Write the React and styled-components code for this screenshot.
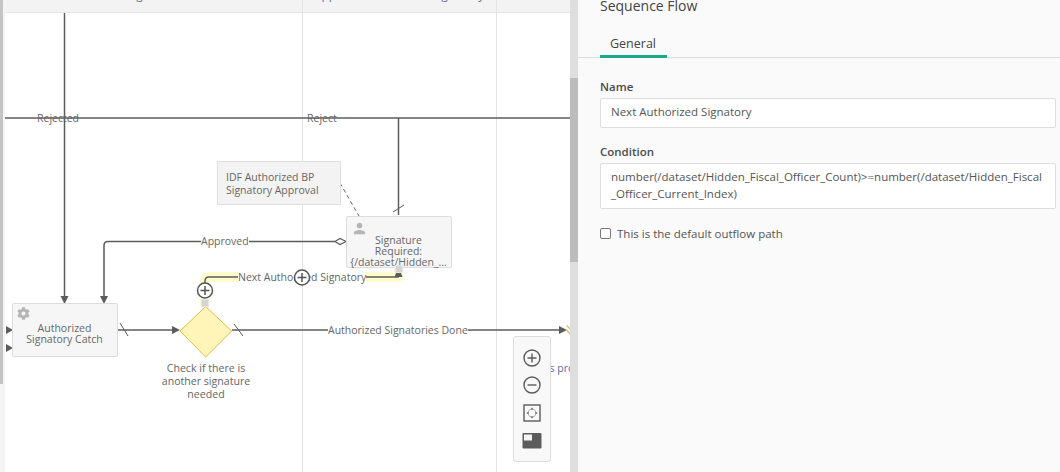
import React from 'react'
import styled, { createGlobalStyle } from 'styled-components'
import { FaCog } from 'react-icons/fa'
import { MdPerson } from 'react-icons/md'

const Global = createGlobalStyle`
html, body {
  margin: 0;
  padding: 0;
  background: #fff;
}
#root {
  height: 472px;
}
`

const Page = styled.div`
display: flex;
width: 1060px;
height: 472px;
overflow: hidden;
font-family: "Open Sans", "Liberation Sans", sans-serif;
color: #555;
`

const LeftEdge = styled.div`
width: 5px;
flex: none;
background: #f4f4f4;
`

const LeftThumb = styled.div`
width: 3px;
height: 384px;
background: #c4c4c4;
`

const Canvas = styled.div`
position: relative;
width: 565px;
flex: none;
overflow: hidden;
background: #fff;
`

const Lanes = styled.div`
display: flex;
height: 100%;
`

const Lane = styled.div`
width: ${p => p.$w}px;
flex: none;
box-sizing: border-box;
border-right: 1.5px solid #e4e4e4;
&:last-child {
  border-right: none;
  flex: 1;
}
`

const LaneHead = styled.div`
height: 13px;
box-sizing: border-box;
background: #f3f3f3;
border-bottom: 1.5px solid #e6e6e6;
overflow: hidden;
text-align: center;
font-size: 12px;
line-height: 16px;
color: #5f6f96;
white-space: nowrap;
& > span {
  display: block;
  margin-top: -13px;
}
`

const Edges = styled.svg`
position: absolute;
left: 0;
top: 0;
width: 565px;
height: 472px;
`

const Label = styled.div`
position: absolute;
left: ${p => p.$x - 5}px;
top: ${p => p.$y - 8}px;
height: 16px;
line-height: 16px;
font-size: 10.5px;
white-space: nowrap;
color: ${p => p.$color || '#666'};
background: ${p => (p.$clear ? 'transparent' : '#fff')};
`

const Annotation = styled.div`
position: absolute;
left: 212px;
top: 161px;
width: 124px;
height: 44px;
box-sizing: border-box;
padding: 9px 0 0 8px;
background: #f3f3f3;
border: 1px solid #dedede;
font-size: 10.5px;
line-height: 13px;
color: #666;
`

const Task = styled.div`
position: absolute;
left: ${p => p.$x - 5}px;
top: ${p => p.$y}px;
width: 106px;
height: ${p => p.$h}px;
box-sizing: border-box;
padding-top: ${p => p.$pad}px;
background: #f6f6f6;
border: 1px solid #dddddd;
border-radius: 2px;
font-size: 10.5px;
line-height: 11px;
text-align: center;
color: #666;
white-space: nowrap;
`

const TaskIcon = styled.div`
position: absolute;
left: 4px;
top: 3px;
display: flex;
color: #b5b5b5;
`

const Handle = styled.div`
position: absolute;
left: ${p => p.$x - 5}px;
top: ${p => p.$y}px;
width: 8px;
height: 8px;
background: #d4d4d4;
border: 1px solid #e6e6e6;
box-sizing: border-box;
`

const GatewayText = styled.div`
position: absolute;
left: 150px;
top: 362px;
width: 102px;
font-size: 10.6px;
line-height: 13px;
text-align: center;
color: #666;
`

const Zoombar = styled.div`
position: absolute;
left: 508px;
top: 336px;
width: 38px;
height: 126px;
box-sizing: border-box;
padding-top: 12px;
display: flex;
flex-direction: column;
align-items: center;
gap: 9px;
background: #f8f8f8;
border: 1px solid #dcdcdc;
border-radius: 3px;
`

const ToolIcon = styled.svg`
width: 20px;
height: 18px;
display: block;
margin-top: ${p => p.$top || 0}px;
`

const Scrollbar = styled.div`
width: 8px;
flex: none;
background: #dedede;
padding-top: 78px;
box-sizing: border-box;
`

const Thumb = styled.div`
height: 184px;
background: #bcbcbc;
`

const Panel = styled.div`
flex: 1;
box-sizing: border-box;
background: #fafafa;
padding: 0 4px 0 22px;
overflow: hidden;
`

const Title = styled.div`
font-size: 14px;
line-height: 20px;
margin-top: -4px;
color: #444;
`

const Tabs = styled.div`
display: flex;
margin: 19px -4px 0 -22px;
padding-left: 22px;
height: 23px;
border-bottom: 1px solid #dddddd;
box-sizing: border-box;
`

const Tab = styled.div`
box-sizing: border-box;
width: 67px;
height: 23px;
padding-left: 10px;
font-size: 12.5px;
font-weight: 500;
line-height: 18px;
color: #444;
border-bottom: 3px solid #1aa888;
`

const Field = styled.div`
display: flex;
flex-direction: column;
margin-top: ${p => p.$top}px;
`

const FieldLabel = styled.label`
font-size: 11.5px;
font-weight: 600;
line-height: 16px;
color: #4a4a4a;
margin-bottom: 3px;
`

const Input = styled.div`
box-sizing: border-box;
min-height: ${p => p.$h}px;
padding: ${p => p.$pad}px 10px 0;
background: #fff;
border: 1px solid #dddddd;
border-radius: 2px;
font-size: 11.5px;
line-height: 16.5px;
color: #555;
word-break: break-all;
`

const CheckRow = styled.label`
display: flex;
align-items: center;
gap: 6px;
margin-top: 16px;
height: 16px;
font-size: 11.5px;
color: #555;
`

const Check = styled.span`
width: 11px;
height: 11px;
box-sizing: border-box;
border: 1px solid #777;
border-radius: 2px;
background: #fff;
`

function App() {
  return (
    <Page>
      <Global />
      <LeftEdge><LeftThumb /></LeftEdge>
      <Canvas>
        <Lanes>
          <Lane $w={297.5}><LaneHead><span>Signature</span></LaneHead></Lane>
          <Lane $w={194}><LaneHead><span>Approval Authorized Signatory</span></LaneHead></Lane>
          <Lane><LaneHead /></Lane>
        </Lanes>

        <Edges viewBox="5 0 565 472" fill="none">
          <path d="M205 305 V281 Q205 277 209 277 H238 M365 277 H398.5 V266" stroke="#fffbcc" strokeWidth="10" strokeLinejoin="round" />
          <g stroke="#5c5c5c" strokeWidth="1.5">
            <path d="M5 118 H570" />
            <path d="M64.5 13 V298" />
            <path d="M398.5 118 V215" />
            <path d="M393 212 L404 205" strokeWidth="1" />
            <path d="M335 241.5 H108 Q104 241.5 104 245.5 V298" />
            <path d="M238 277 H209 Q205 277 205 281 V284 M365 277 H398 V272" />
            <path d="M118 330 H174" />
            <path d="M120 323 L128 336 M234 324 L243 336" strokeWidth="1" />
            <path d="M232 330 H560" />
          </g>
          <path d="M335 241.5 L340 238.5 L346 241.5 L340 244.5 Z" fill="#fff" stroke="#5c5c5c" strokeWidth="1.2" />
          <path d="M340 183 L359 216" stroke="#666" strokeDasharray="4 3" />
          <g fill="#5c5c5c">
            <path d="M60.5 296 H68.5 L64.5 304 Z" />
            <path d="M100 296 H108 L104 304 Z" />
            <path d="M172 326 V334 L180 330 Z" />
            <path d="M559 326 V334 L567 330 Z" />
            <path d="M6 326 V334 L13 330 Z" />
            <path d="M6 344 V352 L13 348 Z" />
            <path d="M394.5 277 H402.5 L401 273 H396 Z" />
          </g>
          <path d="M205.7 306.5 L231.7 331 L205.7 357 L180 331 Z" fill="#fff5b8" stroke="#e8b84a" />
          <path d="M571 330 L566.7 325.5 M566.7 330 L570 334" stroke="#e8b84a" strokeWidth="1.2" />
        </Edges>

        <Label $x={37} $y={118} $clear>Rejected</Label>
        <Label $x={307} $y={118} $clear>Reject</Label>
        <Label $x={201} $y={241}>Approved</Label>
        <Label $x={238} $y={277}>Next Authorized Signatory</Label>
        <Label $x={328} $y={330}>Authorized Signatories Done</Label>
        <Label $x={549.5} $y={368} $clear $color="#5a6aa8">s pro</Label>

        <Annotation>IDF Authorized BP<br />Signatory Approval</Annotation>

        <Task $x={345.5} $y={216} $h={52} $pad={18}>
          <TaskIcon><MdPerson size={17} /></TaskIcon>
          Signature<br />Required:<br />{'{/dataset/Hidden_...'}
        </Task>
        <Task $x={11.5} $y={303} $h={54} $pad={19}>
          <TaskIcon><FaCog size={13} /></TaskIcon>
          Authorized<br />Signatory Catch
        </Task>

        <Handle $x={395} $y={265} />
        <Handle $x={201} $y={299} />

        <Edges viewBox="5 0 565 472" fill="none">
          <g stroke="#555" strokeWidth="1.5" fill="#fff">
            <circle cx="302" cy="277.5" r="7.5" />
            <circle cx="205" cy="290.5" r="7.5" />
          </g>
          <path d="M297.5 277.5 H306.5 M302 273 V282 M200.5 290.5 H209.5 M205 286 V295" stroke="#555" strokeWidth="1.5" />
        </Edges>

        <GatewayText>Check if there is<br />another signature<br />needed</GatewayText>

        <Zoombar>
          <ToolIcon viewBox="0 0 20 18" fill="none" stroke="#5c5c5c" strokeWidth="1.4">
            <circle cx="10" cy="9" r="8" />
            <path d="M10 4.5 V13.5 M5.5 9 H14.5" />
          </ToolIcon>
          <ToolIcon viewBox="0 0 20 18" fill="none" stroke="#5c5c5c" strokeWidth="1.4">
            <circle cx="10" cy="9" r="8" />
            <path d="M5.5 9 H14.5" />
          </ToolIcon>
          <ToolIcon viewBox="0 0 20 18" fill="none" $top={1}>
            <rect x="2" y="1" width="16" height="16" stroke="#666" strokeWidth="1.5" />
            <circle cx="10" cy="9" r="4" stroke="#bbb" />
            <path d="M10 3.5 L8.5 5.5 H11.5 Z M10 14.5 L8.5 12.5 H11.5 Z M4.5 9 L6.5 7.5 V10.5 Z M15.5 9 L13.5 7.5 V10.5 Z" fill="#666" />
          </ToolIcon>
          <ToolIcon viewBox="0 0 20 18" $top={1}>
            <rect x="0.5" y="1" width="19" height="15.5" rx="1" fill="#5c5c5c" />
            <rect x="2" y="2.5" width="8" height="6" fill="#f4f4f4" />
          </ToolIcon>
        </Zoombar>
      </Canvas>
      <Scrollbar><Thumb /></Scrollbar>
      <Panel>
        <Title>Sequence Flow</Title>
        <Tabs><Tab>General</Tab></Tabs>
        <Field $top={21}>
          <FieldLabel>Name</FieldLabel>
          <Input $h={30} $pad={5}>Next Authorized Signatory</Input>
        </Field>
        <Field $top={16}>
          <FieldLabel>Condition</FieldLabel>
          <Input $h={46} $pad={5}>
            number(/dataset/Hidden_Fiscal_Officer_Count)&gt;=number(/dataset/Hidden_Fiscal<br />
            _Officer_Current_Index)
          </Input>
        </Field>
        <CheckRow><Check />This is the default outflow path</CheckRow>
      </Panel>
    </Page>
  )
}

export default App
